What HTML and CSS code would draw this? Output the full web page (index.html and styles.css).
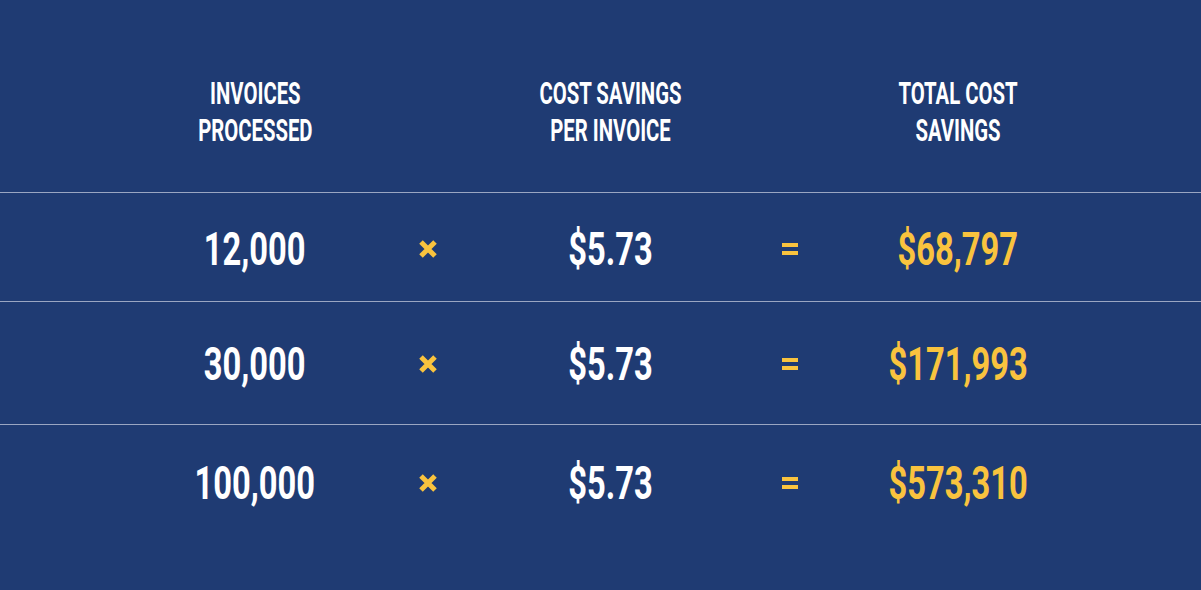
FILE: index.html
```html
<!DOCTYPE html>
<html>
<head>
<meta charset="utf-8">
<link rel="stylesheet" href="styles.css">
</head>
<body>
<div class="table">
  <div class="row head">
    <div class="cell"><span class="t">INVOICES<br>PROCESSED</span></div>
    <div class="cell"></div>
    <div class="cell"><span class="t">COST SAVINGS<br>PER INVOICE</span></div>
    <div class="cell"></div>
    <div class="cell"><span class="t">TOTAL COST<br>SAVINGS</span></div>
  </div>
  <div class="row r1">
    <div class="cell"><span class="n">12,000</span></div>
    <div class="cell op"><svg class="times" viewBox="0 0 20 20"><path d="M3 3 L17 17 M17 3 L3 17" stroke="#f9c33e" stroke-width="5" stroke-linecap="butt"/></svg></div>
    <div class="cell"><span class="n">$5.73</span></div>
    <div class="cell op"><span class="eq"><i></i><i></i></span></div>
    <div class="cell"><span class="n y">$68,797</span></div>
  </div>
  <div class="row r2">
    <div class="cell"><span class="n">30,000</span></div>
    <div class="cell op"><svg class="times" viewBox="0 0 20 20"><path d="M3 3 L17 17 M17 3 L3 17" stroke="#f9c33e" stroke-width="5" stroke-linecap="butt"/></svg></div>
    <div class="cell"><span class="n">$5.73</span></div>
    <div class="cell op"><span class="eq"><i></i><i></i></span></div>
    <div class="cell"><span class="n y">$171,993</span></div>
  </div>
  <div class="row r3">
    <div class="cell"><span class="n">100,000</span></div>
    <div class="cell op"><svg class="times" viewBox="0 0 20 20"><path d="M3 3 L17 17 M17 3 L3 17" stroke="#f9c33e" stroke-width="5" stroke-linecap="butt"/></svg></div>
    <div class="cell"><span class="n">$5.73</span></div>
    <div class="cell op"><span class="eq"><i></i><i></i></span></div>
    <div class="cell"><span class="n y">$573,310</span></div>
  </div>
</div>
</body>
</html>
```
FILE: styles.css
```css
html, body {
  margin: 0;
  padding: 0;
  background: #1f3b73;
}
body {
  width: 1201px;
  height: 590px;
  overflow: hidden;
  font-family: Roboto, "Liberation Sans", sans-serif;
  font-weight: 700;
  color: #ffffff;
}
.table {
  display: flex;
  flex-direction: column;
}
.row {
  display: grid;
  grid-template-columns: 290px 56px 308px 52px 284px;
  padding-left: 110px;
  align-items: start;
  box-sizing: border-box;
}
.cell {
  display: flex;
  justify-content: center;
  text-align: center;
}
.head {
  height: 193px;
  padding-top: 75px;
  border-bottom: 1px solid #9aa6c2;
}
.r1 {
  height: 109px;
  padding-top: 31px;
  border-bottom: 1px solid #9aa6c2;
}
.r2 {
  height: 123px;
  padding-top: 37px;
  border-bottom: 1px solid #9aa6c2;
}
.r3 {
  height: 165px;
  padding-top: 33px;
}
.t {
  display: inline-block;
  font-size: 31px;
  line-height: 37px;
  transform: scaleX(0.655);
  white-space: nowrap;
}
.n {
  display: inline-block;
  font-size: 46px;
  line-height: 50px;
  transform: scaleX(0.71);
  white-space: nowrap;
}
.y {
  color: #f9c33e;
}
.op {
  height: 50px;
  align-items: center;
}
.times {
  width: 20px;
  height: 20px;
  display: block;
}
.eq {
  display: flex;
  flex-direction: column;
  gap: 4px;
}
.eq i {
  display: block;
  width: 16px;
  height: 4px;
  background: #f9c33e;
}
```
